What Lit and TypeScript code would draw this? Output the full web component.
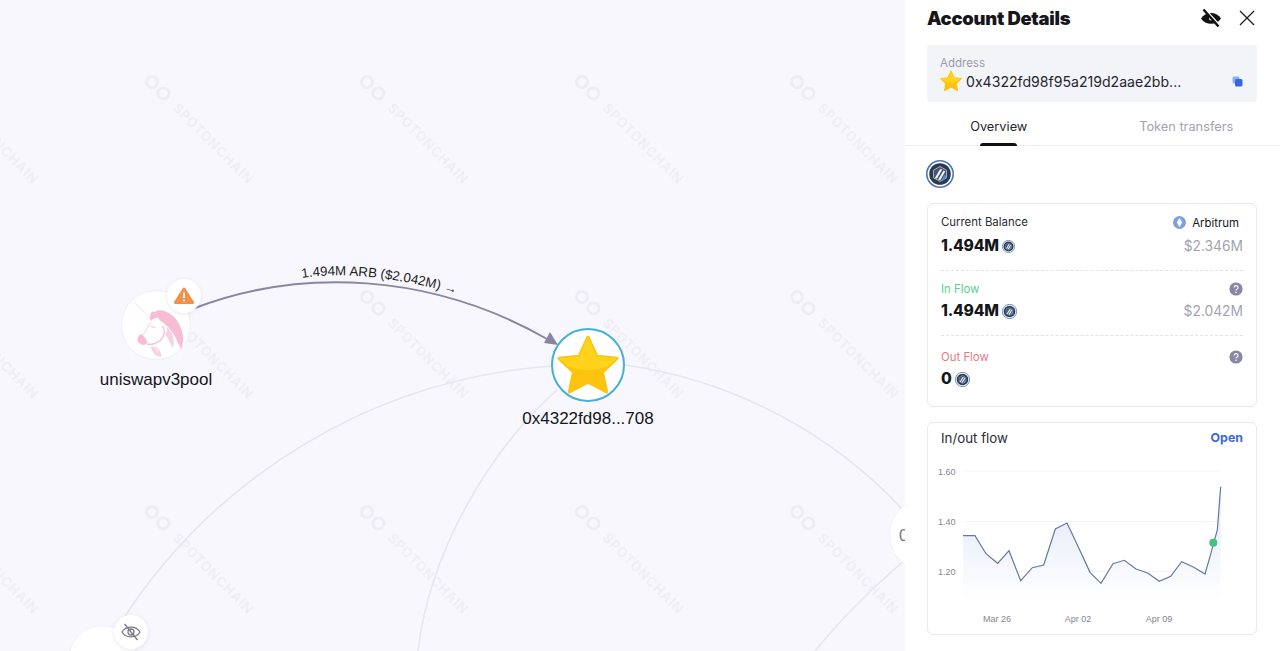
import { LitElement, css, html, svg } from "lit";
import { customElement, property } from "lit/decorators.js";

// chart points, page coords taken off the reference
const FLOW = [
	[963, 535.7], [975, 535.7], [986, 553.7], [997.7, 563.3], [1009, 550.7], [1020.7, 580.7],
	[1032.3, 567.7], [1043.7, 565], [1055.3, 529], [1067, 523], [1078.3, 547], [1090, 572.3],
	[1101, 583.3], [1113, 563.7], [1124.3, 560.3], [1136, 569], [1147.7, 573], [1159.3, 581.3],
	[1170.7, 576.3], [1181.7, 561.7], [1193.3, 567], [1205, 574], [1210, 556.7], [1217.3, 530], [1220.7, 486.7],
];

@customElement("star-icon")
export class StarIcon extends LitElement {
	static styles = css`
		:host { display: inline-flex; }
	`;
	@property({ type: Number }) size = 22;

	render() {
		return html`<svg width=${this.size} height=${this.size} viewBox="0 0 60 60">
			<path
				d="M30 3 38.5 21.5 58 23.5 44 37 48 56 30 46.5 12 56 16 37 2 23.5 21.5 21.5Z"
				fill="#fcc30f"
				stroke="#fcc30f"
				stroke-width="3"
				stroke-linejoin="round"
			/>
			<path d="M30 3 38.5 21.5 58 23.5 50 31Q30 39 10 31L2 23.5 21.5 21.5Z" fill="#ffd21c" />
		</svg>`;
	}
}

@customElement("arb-logo")
export class ArbLogo extends LitElement {
	static styles = css`
		:host { display: inline-flex; }
	`;
	@property({ type: Number }) size = 14;

	render() {
		return html`<svg width=${this.size} height=${this.size} viewBox="0 0 28 28">
			<circle cx="14" cy="14" r="13.2" fill="#fff" stroke="#4f74b8" stroke-width="1.6" />
			<circle cx="14" cy="14" r="10.8" fill="#2d3a4e" />
			<path d="M14 6.5 20.5 10.2V17.8L14 21.5 7.5 17.8V10.2Z" fill="#46566e" stroke="#9db2cc" stroke-width="1" />
			<path d="M8.6 18.6 14 9.2h2.4L11 18.6Z" fill="#f2f5fa" />
			<path d="M12.2 19.6 17.6 10.4l1.6 1.2-5 8.6Z" fill="#f2f5fa" />
			<path d="M15.6 20 19 14.2l1.2 3.4-2.6 2.8Z" fill="#4f94dc" />
		</svg>`;
	}
}

@customElement("help-dot")
export class HelpDot extends LitElement {
	static styles = css`
		:host { display: inline-flex; }
	`;

	render() {
		return html`<svg width="14" height="14" viewBox="0 0 14 14">
			<circle cx="7" cy="7" r="6.6" fill="#8986a6" />
			<path d="M5.2 5.6a1.9 1.9 0 1 1 2.6 1.7c-.6.3-.8.6-.8 1.2" fill="none" stroke="#fff" stroke-width="1.2" />
			<circle cx="7" cy="10.3" r=".8" fill="#fff" />
		</svg>`;
	}
}

@customElement("graph-canvas")
export class GraphCanvas extends LitElement {
	static styles = css`
		:host {
			display: block;
			position: relative;
			width: 905px;
			height: 651px;
			overflow: hidden;
			background: #f7f7fd;
		}
		.layer {
			position: absolute;
			left: 0;
			top: 0;
		}
		.mark {
			font: 600 13px "Inter", sans-serif;
			letter-spacing: 1px;
			fill: #eeedf6;
			filter: blur(0.4px);
		}
		.ring {
			fill: none;
			stroke: #eeedf6;
			stroke-width: 3;
		}
		.edge-label {
			font: 13.3px "Liberation Sans", Arial, sans-serif;
			fill: #1c1c22;
		}
		.node {
			position: absolute;
			width: 70px;
			height: 70px;
			box-sizing: border-box;
			border-radius: 50%;
			background: #fff;
			border: 1px solid #efeff6;
			display: flex;
			align-items: center;
			justify-content: center;
		}
		.node.active {
			width: 74px;
			height: 74px;
			border: 2.5px solid #43b0d8;
		}
		.node.peek {
			justify-content: flex-start;
			padding-left: 9px;
			width: 74px;
			height: 74px;
			font: 16.5px "Liberation Sans", Arial, sans-serif;
			color: #77777f;
		}
		.badge {
			position: absolute;
			width: 34px;
			height: 34px;
			border-radius: 50%;
			background: #fff;
			box-shadow: 0 1px 4px rgba(70, 70, 110, 0.12);
			display: flex;
			align-items: center;
			justify-content: center;
		}
		.name {
			position: absolute;
			transform: translateX(-50%);
			white-space: nowrap;
			font: 17px/22px "Liberation Sans", Arial, sans-serif;
			color: #15151a;
		}
	`;

	private watermark(x: number, y: number) {
		return svg`<g transform="translate(${x} ${y}) rotate(45)">
			<circle class="ring" cx="10" cy="0" r="5.5" />
			<circle class="ring" cx="26" cy="0" r="5.5" />
			<text class="mark" x="43" y="5">SPOTONCHAIN</text>
		</g>`;
	}

	render() {
		const xs = [-70, 145, 360, 575, 790];
		const ys = [75, 290, 505];
		return html`
			<svg class="layer" width="905" height="651" viewBox="0 0 905 651">
				<defs>
					<path id="edge-text" d="M302 278Q365 268 460 295" />
				</defs>
				${ys.map((y) => xs.map((x) => this.watermark(x, y)))}
				<g fill="none" stroke="#e6e5f3" stroke-width="1.5">
					<path d="M118 627A560 560 0 0 1 552 366" />
					<path d="M625 365A470 470 0 0 1 905 512" />
					<path d="M418 651C430 550 490 450 557 390" />
					<path d="M815 651C840 620 870 590 905 560" />
				</g>
				<path d="M195 308C300 268 430 272 547 339" fill="none" stroke="#8a86a2" stroke-width="2" />
				<path d="M558 345 544 343 550 332Z" fill="#8a86a2" />
				<text class="edge-label"><textPath href="#edge-text">1.494M ARB ($2.042M) →</textPath></text>
			</svg>

			<div class="node" style="left:121px;top:290px">
				<svg width="68" height="68" viewBox="12 9 204 204" fill="none">
					<path d="M50 45 100 95" stroke="#f7cfe0" stroke-width="2" />
					<path d="M98 100C93 78 100 66 112 72L122 90C112 88 105 92 98 100Z" fill="#f6bdd5" />
					<path d="M112 70C132 60 164 76 180 102 195 128 200 152 190 184 180 168 176 152 166 138 156 120 140 106 124 96Z" fill="#f6bdd5" />
					<path d="M146 116C164 132 172 156 165 180 156 166 152 152 142 140 146 132 148 124 146 116Z" fill="#f9d0e1" />
					<path d="M98 102 78 136 64 146" stroke="#f8d2e2" stroke-width="3" />
					<path d="M62 142C72 134 86 150 87 165 78 176 62 170 58 155Z" fill="#f6bdd5" />
					<path d="M87 168C104 172 124 164 135 148 140 136 140 124 134 114" stroke="#f6bdd5" stroke-width="4" />
					<path d="M98 178C114 172 126 182 131 206 115 206 104 196 98 178Z" fill="#f9d0e1" />
					<path d="M110 182C118 184 121 190 118 196" stroke="#fff" stroke-width="2" />
					<path d="M98 115 112 119" stroke="#f6bdd5" stroke-width="3" />
				</svg>
			</div>
			<div class="badge" style="left:167px;top:279px">
				<svg width="20" height="18" viewBox="0 0 20 18">
					<path d="M10 2 18.5 15.5H1.5Z" fill="#f19149" stroke="#f19149" stroke-width="3" stroke-linejoin="round" />
					<path d="M10 5.5v5.5" stroke="#fff" stroke-width="1.8" />
					<circle cx="10" cy="13.6" r="1" fill="#fff" />
				</svg>
			</div>
			<div class="name" style="left:156px;top:369px">uniswapv3pool</div>

			<div class="node active" style="left:551px;top:328px"><star-icon size="62"></star-icon></div>
			<div class="name" style="left:588px;top:408px">0x4322fd98...708</div>

			<div class="node" style="left:68px;top:625px"></div>
			<div class="badge" style="left:114px;top:615px">
				<svg width="20" height="18" viewBox="0 0 20 18" fill="none" stroke="#7b7b88" stroke-width="1.3">
					<path d="M1 9C5 2.5 15 2.5 19 9 15 15.5 5 15.5 1 9Z" />
					<circle cx="10" cy="9" r="3" />
					<path d="M3.5 1 16.5 17" />
				</svg>
			</div>

			<div class="node peek" style="left:889px;top:498px">0</div>
		`;
	}
}

@customElement("flow-chart")
export class FlowChart extends LitElement {
	static styles = css`
		:host { display: block; }
		svg { display: block; }
		text {
			font: 9px "Liberation Sans", Arial, sans-serif;
			fill: #85858f;
		}
	`;

	render() {
		const line = FLOW.map((p) => p.join(",")).join(" ");
		const last = FLOW[FLOW.length - 1];
		const area = `${FLOW[0][0]},600 ${line} ${last[0]},600`;
		return html`<svg width="328" height="176" viewBox="928 456 328 176">
			<defs>
				<linearGradient id="fade" x1="0" y1="0" x2="0" y2="1">
					<stop offset="0" stop-color="#dfe7f8" />
					<stop offset="1" stop-color="#ffffff" />
				</linearGradient>
			</defs>
			${[471, 521.5, 571.5].map((y) => svg`<line x1="965" x2="1220" y1=${y} y2=${y} stroke="#f3f3f7" />`)}
			<polygon points=${area} fill="url(#fade)" />
			<polyline points=${line} fill="none" stroke="#66779f" stroke-width="1.2" />
			<circle cx="1213.3" cy="542.7" r="4" fill="#3ec47e" />
			<text x="938" y="474.5">1.60</text>
			<text x="938" y="525">1.40</text>
			<text x="938" y="575">1.20</text>
			<text x="997" y="622" text-anchor="middle">Mar 26</text>
			<text x="1078" y="622" text-anchor="middle">Apr 02</text>
			<text x="1159" y="622" text-anchor="middle">Apr 09</text>
		</svg>`;
	}
}

@customElement("account-panel")
export class AccountPanel extends LitElement {
	static styles = css`
		:host {
			display: block;
			width: 375px;
			height: 651px;
			overflow: hidden;
			background: #fff;
			font-family: "Inter", "Noto Sans", sans-serif;
			color: #15151a;
		}
		.head {
			height: 36px;
			padding: 0 22px;
			display: flex;
			align-items: center;
			justify-content: space-between;
		}
		.title {
			font-size: 18.4px;
			font-weight: 900;
			letter-spacing: -0.25px;
		}
		.head-icons {
			display: flex;
			align-items: center;
			gap: 16px;
			margin-right: 2px;
		}
		.address {
			margin: 9px 23px 0 22px;
			height: 57px;
			box-sizing: border-box;
			padding: 11px 14px 0 13px;
			background: #f3f4f8;
			border-radius: 4px;
		}
		.address-label {
			font-size: 11.5px;
			line-height: 14px;
			color: #9a9ab0;
		}
		.address-row {
			display: flex;
			align-items: center;
			height: 22px;
			font-size: 14.1px;
			color: #25252c;
		}
		.address-text {
			margin-left: 4px;
			flex: 1;
		}
		.tabs {
			display: flex;
			height: 43px;
			border-bottom: 1px solid #ececf1;
		}
		.tab {
			flex: 1;
			position: relative;
			padding-top: 16px;
			line-height: 18px;
			text-align: center;
			font-size: 12.8px;
			color: #a3a3b3;
		}
		.tab.on {
			color: #25252c;
		}
		.tab.on::after {
			content: "";
			position: absolute;
			left: 75px;
			bottom: -1px;
			width: 37px;
			height: 3px;
			background: #111;
			border-radius: 3px 3px 0 0;
		}
		.logo-row {
			height: 57px;
			padding: 14px 0 0 21px;
			box-sizing: border-box;
		}
		.card {
			margin: 0 23px 0 22px;
			border: 1px solid #e9e9ef;
			border-radius: 6px;
		}
		.balances {
			height: 204px;
			box-sizing: border-box;
			padding: 0 13px 0 13px;
		}
		.sec {
			border-bottom: 1px dashed #e2e2e8;
		}
		.sec:last-child {
			border-bottom: none;
		}
		.sec-a { padding: 8px 0 12px; }
		.sec-b { padding: 8px 0 12px; }
		.sec-c { padding: 11px 0 0; }
		.row {
			display: flex;
			align-items: center;
			justify-content: space-between;
		}
		.label {
			font-size: 11.4px;
			line-height: 20px;
			color: #2c2c34;
		}
		.label.in { color: #57cf94; }
		.label.out { color: #e27a84; }
		.chain {
			display: flex;
			align-items: center;
			gap: 6px;
			font-size: 11.4px;
			margin: 1px 4px 0 0;
		}
		.amount {
			display: flex;
			align-items: center;
			gap: 3px;
			font-size: 15.6px;
			font-weight: 800;
			line-height: 24px;
			letter-spacing: -0.2px;
		}
		.sec-a .values { margin-top: 2px; }
		.usd {
			font-size: 13.8px;
			color: #a2a2b0;
		}
		.flow {
			height: 213px;
			margin-top: 15px;
			box-sizing: border-box;
			overflow: hidden;
		}
		.flow-head {
			height: 29px;
			margin-bottom: 4px;
			padding: 0 13px;
			display: flex;
			align-items: center;
			justify-content: space-between;
		}
		.flow-title {
			font-size: 13.3px;
			color: #2c2c34;
		}
		.open {
			font-size: 12.4px;
			font-weight: 700;
			color: #3d6ad6;
		}
	`;

	render() {
		return html`
			<div class="head">
				<div class="title">Account Details</div>
				<div class="head-icons">
					<svg width="22" height="20" viewBox="0 0 22 20">
						<path d="M1 10.5C5 3 17 3 21 10.5 17 17.5 5 17.5 1 10.5Z" fill="#111" />
						<circle cx="11" cy="10.5" r="2" fill="#fff" />
						<path d="M5.5 1.5 20 17.5" stroke="#fff" stroke-width="1.6" />
						<path d="M3.5 1.5 18.5 18.5" stroke="#111" stroke-width="2.4" />
					</svg>
					<svg width="18" height="18" viewBox="0 0 18 18">
						<path d="M2 2 16 16M16 2 2 16" stroke="#22222a" stroke-width="1.4" />
					</svg>
				</div>
			</div>
			<div class="address">
				<div class="address-label">Address</div>
				<div class="address-row">
					<star-icon size="22"></star-icon>
					<span class="address-text">0x4322fd98f95a219d2aae2bb...</span>
					<svg width="11" height="11" viewBox="0 0 11 11">
						<rect x="0.5" y="0.5" width="7" height="7" rx="1.5" fill="#8fb0ef" />
						<rect x="3" y="3" width="7.5" height="7.5" rx="1.5" fill="#3568dc" />
					</svg>
				</div>
			</div>
			<div class="tabs">
				<div class="tab on">Overview</div>
				<div class="tab">Token transfers</div>
			</div>
			<div class="logo-row"><arb-logo size="28"></arb-logo></div>
			<div class="card balances">
				<div class="sec sec-a">
					<div class="row">
						<span class="label">Current Balance</span>
						<span class="chain">
							<svg width="13" height="13" viewBox="0 0 13 13">
								<circle cx="6.5" cy="6.5" r="6.5" fill="#7f9fe4" />
								<path d="M6.5 2 9.2 6.6 6.5 11 3.8 6.6Z" fill="#fff" />
							</svg>
							Arbitrum
						</span>
					</div>
					<div class="row values">
						<span class="amount">1.494M <arb-logo size="13"></arb-logo></span>
						<span class="usd">$2.346M</span>
					</div>
				</div>
				<div class="sec sec-b">
					<div class="row">
						<span class="label in">In Flow</span>
						<help-dot></help-dot>
					</div>
					<div class="row values">
						<span class="amount">1.494M <arb-logo size="15"></arb-logo></span>
						<span class="usd">$2.042M</span>
					</div>
				</div>
				<div class="sec sec-c">
					<div class="row">
						<span class="label out">Out Flow</span>
						<help-dot></help-dot>
					</div>
					<div class="row values">
						<span class="amount">0 <arb-logo size="15"></arb-logo></span>
					</div>
				</div>
			</div>
			<div class="card flow">
				<div class="flow-head">
					<span class="flow-title">In/out flow</span>
					<span class="open">Open</span>
				</div>
				<flow-chart></flow-chart>
			</div>
		`;
	}
}

@customElement("app-root")
export class AppRoot extends LitElement {
	static styles = css`
		:host {
			display: flex;
			width: 1280px;
			height: 651px;
			overflow: hidden;
		}
	`;

	render() {
		return html`<graph-canvas></graph-canvas><account-panel></account-panel>`;
	}
}
